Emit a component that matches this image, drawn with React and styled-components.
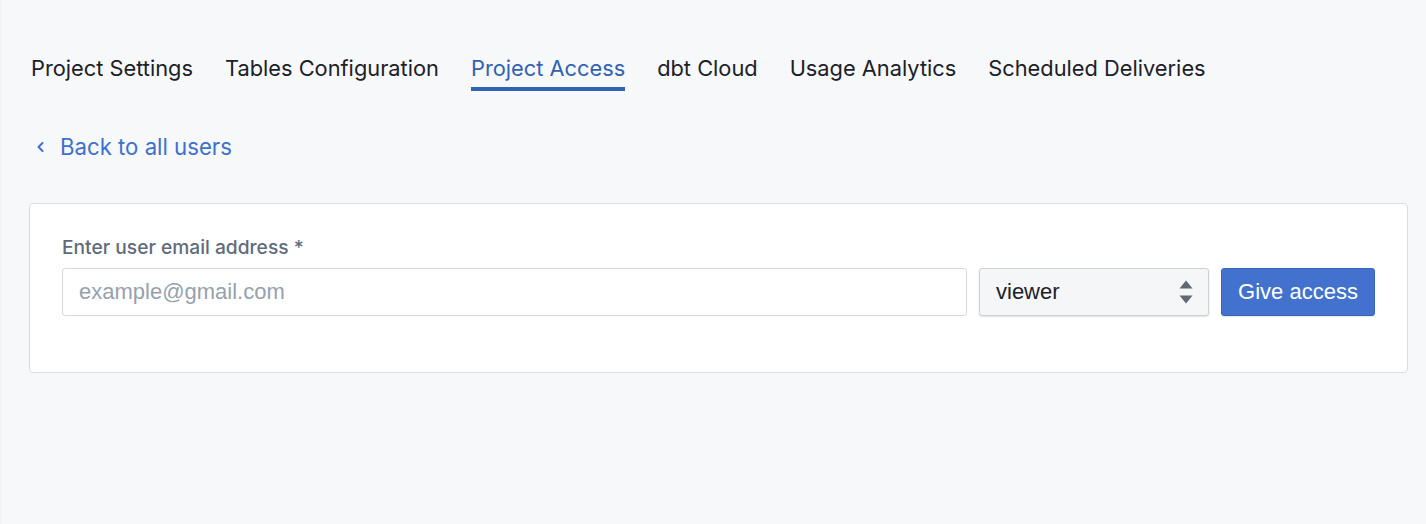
import React from "react";
import styled, { createGlobalStyle } from "styled-components";

const Global = createGlobalStyle`
  html, body { margin: 0; padding: 0; }
  body {
    background: #f7f8fa;
    font-family: Inter, "Noto Sans", "Liberation Sans", sans-serif;
    -webkit-font-smoothing: antialiased;
  }
`;

const Page = styled.div`
  min-height: 524px;
  box-sizing: border-box;
  padding: 56px 18px 0 27px;
  border-left: 2px solid #f1f2f4;
`;

const Tabs = styled.nav`
  display: flex;
  gap: 32px;
  padding-left: 2px;
`;

const Tab = styled.div`
  font-size: 21.8px;
  line-height: 24px;
  color: ${(p) => (p.$active ? "#3162b3" : "#1c2127")};
  padding-bottom: 7px;
  border-bottom: 4px solid ${(p) => (p.$active ? "#3161b1" : "transparent")};
  cursor: pointer;
`;

const BackLink = styled.a`
  display: inline-flex;
  align-items: center;
  gap: 13px;
  margin-top: 44px;
  margin-left: 6px;
  font-size: 22.2px;
  line-height: 24px;
  color: #3d71cc;
  text-decoration: none;
  cursor: pointer;
  svg { display: block; }
`;

const Card = styled.section`
  margin-top: 44px;
  background: #ffffff;
  border: 1px solid #d9dce1;
  border-radius: 4px;
  padding: 33px 32px 56px 32px;
`;

const Label = styled.label`
  display: block;
  font-size: 19.2px;
  line-height: 20px;
  font-weight: 500;
  color: #5f6b7c;
`;

const Row = styled.div`
  display: flex;
  gap: 12px;
  margin-top: 11px;
  height: 48px;
`;

const Input = styled.input`
  flex: 1;
  min-width: 0;
  box-sizing: border-box;
  height: 48px;
  border: 1px solid #d6d9de;
  border-radius: 3px;
  padding: 0 16px;
  font-family: "Liberation Sans", Arial, sans-serif;
  font-size: 22px;
  color: #1c2127;
  background: #fff;
  outline: none;
  &::placeholder { color: #96a1ae; }
`;

const SelectBox = styled.div`
  position: relative;
  width: 230px;
  flex: none;
  box-sizing: border-box;
  height: 48px;
  display: flex;
  align-items: center;
  padding: 0 16px;
  background: #f5f6f8;
  border: 1px solid #cdd1d6;
  border-radius: 3px;
  box-shadow: 0 1px 2px rgba(17, 20, 24, 0.12);
  font-family: "Liberation Sans", Arial, sans-serif;
  font-size: 22px;
  color: #1c2127;
  svg { position: absolute; right: 15px; top: 10px; }
`;

const Button = styled.button`
  height: 48px;
  width: 154px;
  flex: none;
  box-sizing: border-box;
  padding: 0;
  background: #4272cd;
  border: 1px solid #3966bb;
  border-radius: 3px;
  color: #ffffff;
  font-family: "Liberation Sans", Arial, sans-serif;
  font-size: 22px;
  cursor: pointer;
  box-shadow: 0 1px 1px rgba(17, 20, 24, 0.1);
`;

const tabs = [
  "Project Settings",
  "Tables Configuration",
  "Project Access",
  "dbt Cloud",
  "Usage Analytics",
  "Scheduled Deliveries",
];

export default function App() {
  return (
    <>
      <Global />
      <Page>
        <Tabs>
          {tabs.map((t) => (
            <Tab key={t} $active={t === "Project Access"}>
              {t}
            </Tab>
          ))}
        </Tabs>
        <BackLink>
          <svg width="12" height="14" viewBox="0 0 12 14">
            <path d="M7.5 3 L3.5 7 L7.5 11" fill="none" stroke="#3d71cc" strokeWidth="2" strokeLinecap="round" strokeLinejoin="round" />
          </svg>
          Back to all users
        </BackLink>
        <Card>
          <Label>Enter user email address *</Label>
          <Row>
            <Input placeholder="example@gmail.com" />
            <SelectBox>
              viewer
              <svg width="14" height="26" viewBox="0 0 14 26">
                <path d="M7 1.5 L13.5 9.5 L0.5 9.5 Z" fill="#5f6873" />
                <path d="M7 24.5 L13.5 16.5 L0.5 16.5 Z" fill="#5f6873" />
              </svg>
            </SelectBox>
            <Button>Give access</Button>
          </Row>
        </Card>
      </Page>
    </>
  );
}
